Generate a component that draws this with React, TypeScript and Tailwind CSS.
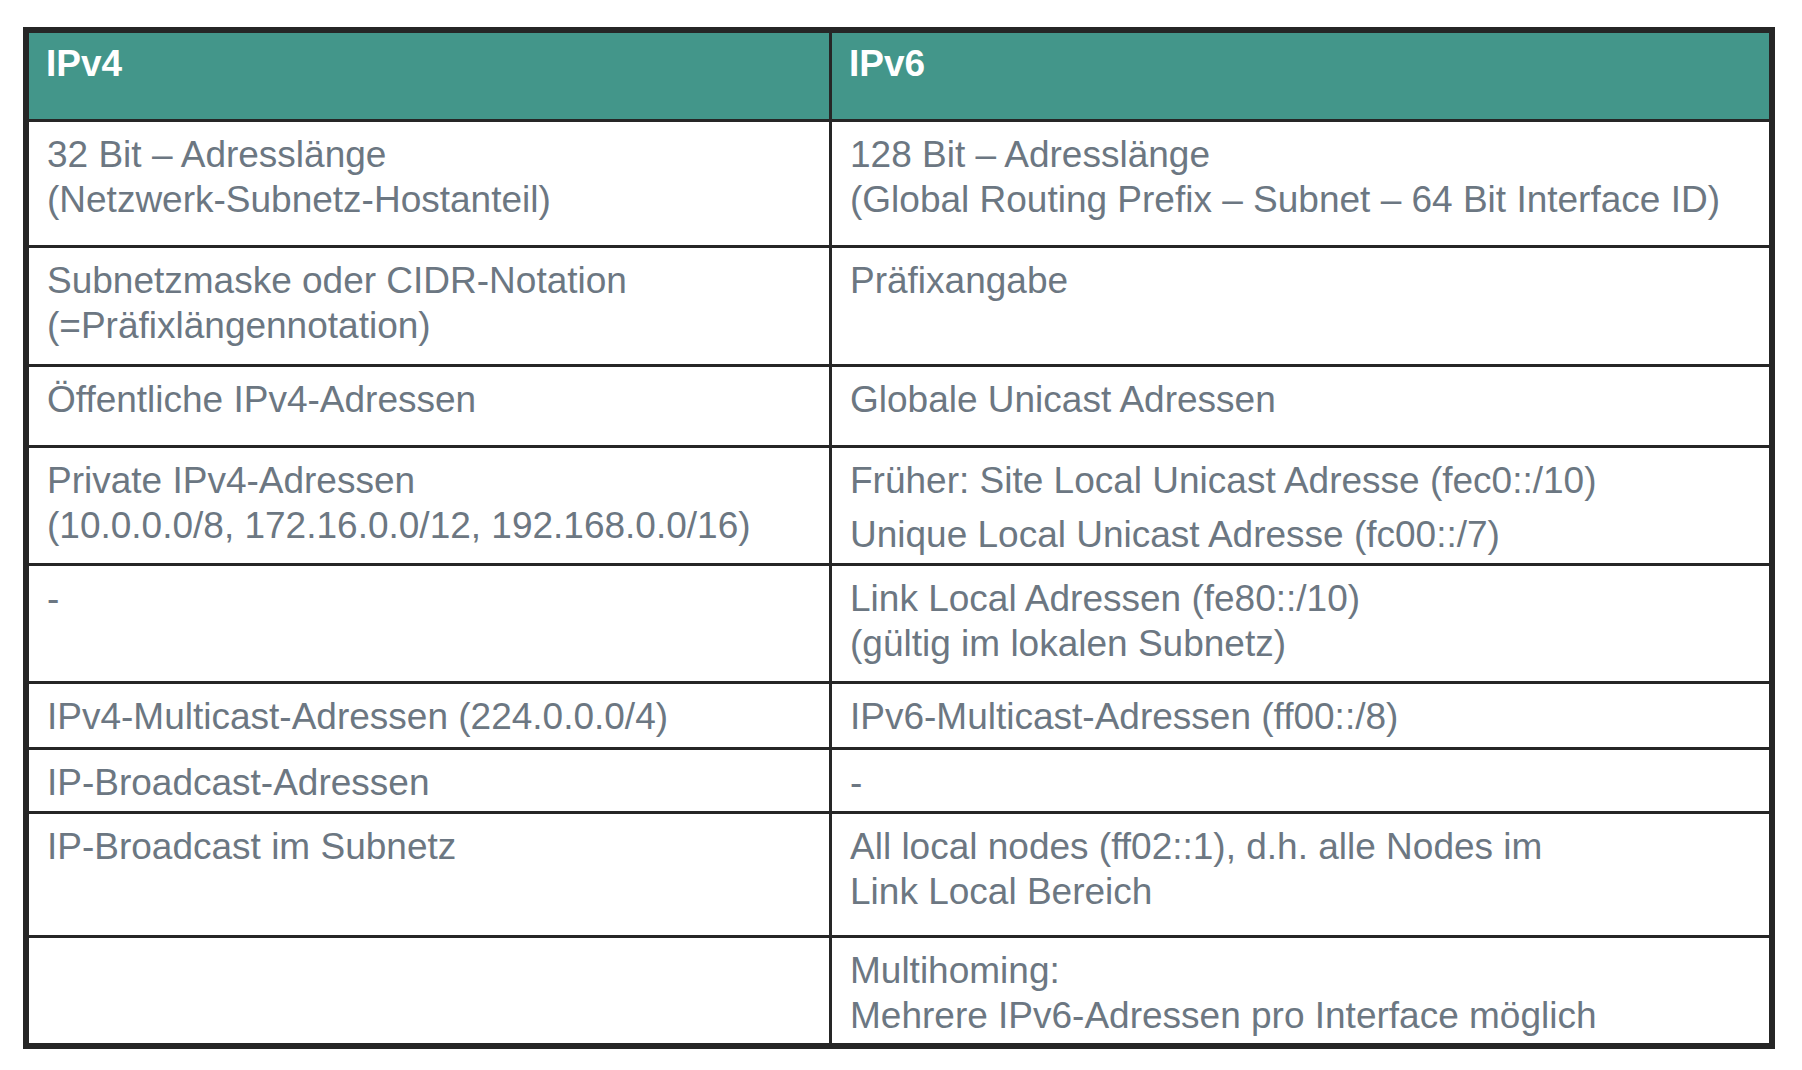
type Row = {
  height: string;
  left: string[];
  right: string[];
  // right column holds separate paragraphs instead of wrapped lines
  paragraphs?: boolean;
};

const rows: Row[] = [
  {
    height: "h-[126px]",
    left: ["32 Bit – Adresslänge", "(Netzwerk-Subnetz-Hostanteil)"],
    right: ["128 Bit – Adresslänge", "(Global Routing Prefix – Subnet – 64 Bit Interface ID)"],
  },
  {
    height: "h-[119px]",
    left: ["Subnetzmaske oder CIDR-Notation", "(=Präfixlängennotation)"],
    right: ["Präfixangabe"],
  },
  {
    height: "h-[81px]",
    left: ["Öffentliche IPv4-Adressen"],
    right: ["Globale Unicast Adressen"],
  },
  {
    height: "h-[118px]",
    left: ["Private IPv4-Adressen", "(10.0.0.0/8, 172.16.0.0/12, 192.168.0.0/16)"],
    right: ["Früher: Site Local Unicast Adresse (fec0::/10)", "Unique Local Unicast Adresse (fc00::/7)"],
    paragraphs: true,
  },
  {
    height: "h-[118px]",
    left: ["-"],
    right: ["Link Local Adressen (fe80::/10)", "(gültig im lokalen Subnetz)"],
  },
  {
    height: "h-[66px]",
    left: ["IPv4-Multicast-Adressen (224.0.0.0/4)"],
    right: ["IPv6-Multicast-Adressen (ff00::/8)"],
  },
  {
    height: "h-[64px]",
    left: ["IP-Broadcast-Adressen"],
    right: ["-"],
  },
  {
    height: "h-[124px]",
    left: ["IP-Broadcast im Subnetz"],
    right: ["All local nodes (ff02::1), d.h. alle Nodes im", "Link Local Bereich"],
  },
  {
    height: "h-[108px]",
    left: [],
    right: ["Multihoming:", "Mehrere IPv6-Adressen pro Interface möglich"],
  },
];

function Cell({ lines, paragraphs }: { lines: string[]; paragraphs?: boolean }) {
  return (
    <div className={`flex flex-col pl-[18px] pt-[10px] ${paragraphs ? "gap-[9px]" : ""}`}>
      {lines.map((l, i) => (
        <div key={i} className="whitespace-nowrap">
          {l}
        </div>
      ))}
    </div>
  );
}

export default function App() {
  return (
    <div className="w-[1802px] h-[1070px] bg-white pt-[27px] pl-[23px] font-['Liberation_Sans',Arial,sans-serif]">
      <div className="w-[1752px] border-[6px] border-[#262626] flex flex-col text-[37px] leading-[45px] text-[#6c7782]">
        <div className="h-[86px] grid grid-cols-[800px_937px] gap-x-[3px] bg-[#262626]">
          <div className="bg-[#43968a] pl-[17px] pt-[8px] font-bold text-white">IPv4</div>
          <div className="bg-[#43968a] pl-[17px] pt-[8px] font-bold text-white">IPv6</div>
        </div>
        {rows.map((r, i) => (
          <div
            key={i}
            className={`${r.height} grid grid-cols-[800px_937px] gap-x-[3px] bg-[#262626] pt-[3px]`}
          >
            <div className="bg-white">
              <Cell lines={r.left} />
            </div>
            <div className="bg-white">
              <Cell lines={r.right} paragraphs={r.paragraphs} />
            </div>
          </div>
        ))}
      </div>
    </div>
  );
}
